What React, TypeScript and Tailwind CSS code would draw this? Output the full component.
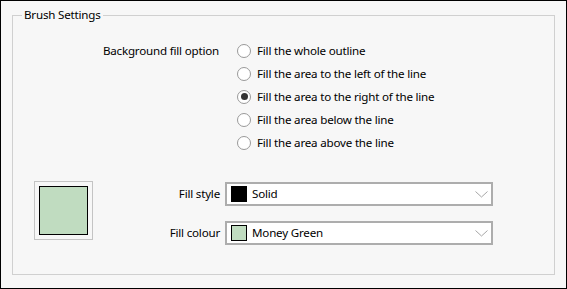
import React from "react";

const FONT = { fontFamily: '"Segoe UI", "Noto Sans", sans-serif', letterSpacing: "-0.2px" };

const fillOptions = [
  "Fill the whole outline",
  "Fill the area to the left of the line",
  "Fill the area to the right of the line",
  "Fill the area below the line",
  "Fill the area above the line",
];

function Radio({ label, checked }: { label: string; checked?: boolean }) {
  return (
    <div className="h-[23px] flex items-center gap-[6px]">
      <span className="w-[14px] h-[14px] rounded-full border-[1.5px] border-[#999999] bg-white flex items-center justify-center shrink-0">
        {checked && <span className="w-[7px] h-[7px] rounded-full bg-[#333333]" />}
      </span>
      <span className="text-[11.6px] text-black leading-none">{label}</span>
    </div>
  );
}

function Combo({ swatch, value }: { swatch: string; value: string }) {
  return (
    <div className="h-[24px] w-[268px] border-2 border-[#adadad] bg-white flex items-center pl-[4px] pr-[3px]">
      <span className="w-[16px] h-[16px] border border-black shrink-0" style={{ background: swatch }} />
      <span className="ml-[5px] text-[11.6px] text-black flex-1 leading-none">{value}</span>
      <svg width="13" height="7" viewBox="0 0 13 7" className="shrink-0">
        <path d="M0.5 0.5 L6.5 6 L12.5 0.5" fill="none" stroke="#a6a6a6" strokeWidth="1" />
      </svg>
    </div>
  );
}

export default function App() {
  return (
    <div className="w-[567px] h-[289px] border border-black bg-[#f7f7f7] flex flex-col" style={FONT}>
      <fieldset className="mx-[11px] mt-[6px] mb-[13px] flex-1 border border-[#d0d0d0] min-w-0">
        <legend className="ml-[9px] px-[2px] text-[11.6px] text-black leading-[16px]">Brush Settings</legend>

        {/* fill option radios */}
        <div className="flex mt-[16px]">
          <div className="w-[206px] text-right text-[11.6px] text-black h-[23px] flex items-center justify-end">
            Background fill option
          </div>
          <div className="ml-[18px] flex flex-col">
            {fillOptions.map((o, i) => (
              <Radio key={o} label={o} checked={i === 2} />
            ))}
          </div>
        </div>

        {/* preview + combos */}
        <div className="flex items-start mt-[28px]">
          <div className="ml-[21px] mt-[-1px] w-[59px] h-[59px] border border-[#c4c4c4] flex items-center justify-center">
            <div className="w-[49px] h-[49px] border border-black bg-[#c0dcc0]" />
          </div>
          <div className="flex-1 flex flex-col gap-[15px] text-right">
            <div className="h-[24px] flex items-center justify-end text-[11.6px] text-black">Fill style</div>
            <div className="h-[24px] flex items-center justify-end text-[11.6px] text-black">Fill colour</div>
          </div>
          <div className="ml-[5px] flex flex-col gap-[15px] mr-[61px]">
            <Combo swatch="#000000" value="Solid" />
            <Combo swatch="#c0dcc0" value="Money Green" />
          </div>
        </div>
      </fieldset>
    </div>
  );
}
